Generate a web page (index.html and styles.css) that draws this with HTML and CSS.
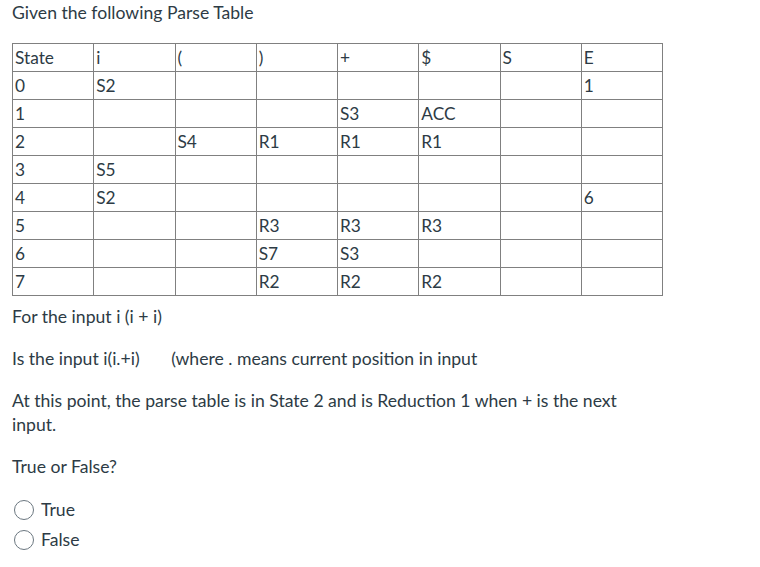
FILE: index.html
```html
<!DOCTYPE html>
<html>
<head>
<meta charset="utf-8">
<link rel="stylesheet" href="styles.css">
</head>
<body>
<div class="question">
  <p class="title">Given the following Parse Table</p>
  <table class="parse">
    <tr><td>State</td><td>i</td><td>(</td><td>)</td><td>+</td><td>$</td><td>S</td><td>E</td></tr>
    <tr><td>0</td><td>S2</td><td></td><td></td><td></td><td></td><td></td><td>1</td></tr>
    <tr><td>1</td><td></td><td></td><td></td><td>S3</td><td>ACC</td><td></td><td></td></tr>
    <tr><td>2</td><td></td><td>S4</td><td>R1</td><td>R1</td><td>R1</td><td></td><td></td></tr>
    <tr><td>3</td><td>S5</td><td></td><td></td><td></td><td></td><td></td><td></td></tr>
    <tr><td>4</td><td>S2</td><td></td><td></td><td></td><td></td><td></td><td>6</td></tr>
    <tr><td>5</td><td></td><td></td><td>R3</td><td>R3</td><td>R3</td><td></td><td></td></tr>
    <tr><td>6</td><td></td><td></td><td>S7</td><td>S3</td><td></td><td></td><td></td></tr>
    <tr><td>7</td><td></td><td></td><td>R2</td><td>R2</td><td>R2</td><td></td><td></td></tr>
  </table>
  <p class="after-table">For the input i (i + i)</p>
  <p>Is the input i(i.+i)&nbsp;&nbsp;&nbsp;&nbsp;&nbsp;&nbsp; (where . means current position in input</p>
  <p>At this point, the parse table is in State 2 and is Reduction 1 when + is the next input.</p>
  <p>True or False?</p>
  <div class="answers">
    <label class="answer"><span class="radio"></span><span>True</span></label>
    <label class="answer"><span class="radio"></span><span>False</span></label>
  </div>
</div>
</body>
</html>
```
FILE: styles.css
```css
html, body {
  margin: 0;
  padding: 0;
  background: #ffffff;
}
body {
  font-family: Lato, "Open Sans", sans-serif;
  font-size: 17.6px;
  line-height: 24px;
  color: #2d3b45;
}
.question {
  padding: 1px 0 0 12px;
}
.question p {
  margin: 0 0 18px 0;
  max-width: 640px;
}
.title {
  margin-bottom: 18px;
}
.parse {
  border-collapse: collapse;
  width: 651px;
  table-layout: fixed;
  margin-bottom: 9px;
}
.parse td {
  border: 1px solid #808080;
  height: 27px;
  padding: 0 2px;
  vertical-align: middle;
  font-size: 17.3px;
  line-height: 20px;
}
.question p.after-table {
  margin-bottom: 18px;
}
.answers {
  display: flex;
  flex-direction: column;
  gap: 6px;
  margin-top: 19px;
}
.answer {
  display: flex;
  align-items: center;
  gap: 7px;
  height: 24px;
  padding-left: 2px;
}
.radio {
  width: 20px;
  height: 20px;
  border: 1px solid #6b7780;
  border-radius: 50%;
  box-sizing: border-box;
  background: #fff;
}
```
